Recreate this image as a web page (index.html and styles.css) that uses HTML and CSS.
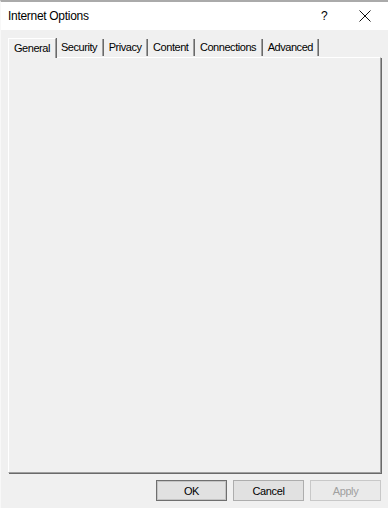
FILE: index.html
```html
<!DOCTYPE html>
<html lang="en">
<head>
    <meta charset="UTF-8">
    <title>Internet Options</title>
    <link rel="stylesheet" href="styles.css">
</head>
<body>
    <div class="window">
        <div class="titlebar">
            <span class="title">Internet Options</span>
            <span class="help">?</span>
            <span class="close">
                <svg width="12" height="12" viewBox="0 0 12 12">
                    <path d="M0.5 0.5 L11.5 11.5 M11.5 0.5 L0.5 11.5" stroke="#111" stroke-width="1" fill="none"/>
                </svg>
            </span>
        </div>

        <div class="dialog">
            <div class="tabs">
                <div class="tab active">General</div>
                <div class="tab">Security</div>
                <div class="tab">Privacy</div>
                <div class="tab">Content</div>
                <div class="tab">Connections</div>
                <div class="tab">Advanced</div>
            </div>

            <div class="panel"></div>

            <div class="buttons">
                <button class="btn default">OK</button>
                <button class="btn">Cancel</button>
                <button class="btn" disabled>Apply</button>
            </div>
        </div>
    </div>
</body>
</html>
```

FILE: styles.css
```css
body {
    margin: 0;
    padding: 0;
    background-color: #f0f0f0;
    font-family: "Liberation Sans", Arial, sans-serif;
    color: #000;
    overflow: hidden;
}

.window {
    width: 388px;
    height: 508px;
    box-sizing: border-box;
    border-top: 2px solid #aaaaaa;
    border-left: 1px solid #f8f8f8;
    display: flex;
    flex-direction: column;
}

/* Title bar */
.titlebar {
    height: 28px;
    background: #ffffff;
    display: flex;
    align-items: center;
    padding-left: 7px;
}

.title {
    font-size: 12px;
    letter-spacing: -0.3px;
    flex: 1;
}

.help {
    font-size: 12px;
    width: 14px;
    margin-right: 24px;
    margin-top: -1px;
}

.close {
    width: 12px;
    height: 12px;
    margin-right: 17px;
    display: flex;
}

/* Dialog body */
.dialog {
    flex: 1;
    display: flex;
    flex-direction: column;
    padding: 7px 7px 0 7px;
}

.tabs {
    display: flex;
    align-items: flex-end;
    height: 20px;
    position: relative;
    z-index: 1;
}

.tab {
    height: 17px;
    padding: 0 4.5px 0 5px;
    font-size: 11px;
    letter-spacing: -0.45px;
    line-height: 17px;
    border-right: 1px solid #a0a0a0;
    box-shadow: 1px 0 0 #6a6a6a;
    margin-right: 1px;
    margin-bottom: 1px;
}

.tab.active {
    height: 19px;
    line-height: 18px;
    padding: 0 5px 0 5px;
    border-left: 1px solid #ffffff;
    border-top: 1px solid #ffffff;
    margin-bottom: -1px;
    margin-right: 0;
    background: #f0f0f0;
}

.panel {
    height: 414px;
    border-top: 1px solid #ffffff;
    border-left: 1px solid #ffffff;
    border-right: 1px solid #a0a0a0;
    border-bottom: 1px solid #a0a0a0;
    box-shadow: 1px 1px 0 #6a6a6a;
    background: #f0f0f0;
}

.buttons {
    display: flex;
    justify-content: flex-end;
    gap: 6px;
    margin-top: 7px;
}

.btn {
    width: 71px;
    height: 21px;
    padding: 0;
    font-family: "Liberation Sans", Arial, sans-serif;
    font-size: 11px;
    letter-spacing: -0.4px;
    color: #000;
    background: #e1e1e1;
    border: 1px solid #adadad;
    border-radius: 0;
}

.btn.default {
    border: 1px solid #6f6f6f;
    box-shadow: inset 0 0 0 1px #c4c4c4;
}

.btn:disabled {
    color: #a0a0a0;
    background: #eaeaea;
    border-color: #c8c8c8;
}
```
